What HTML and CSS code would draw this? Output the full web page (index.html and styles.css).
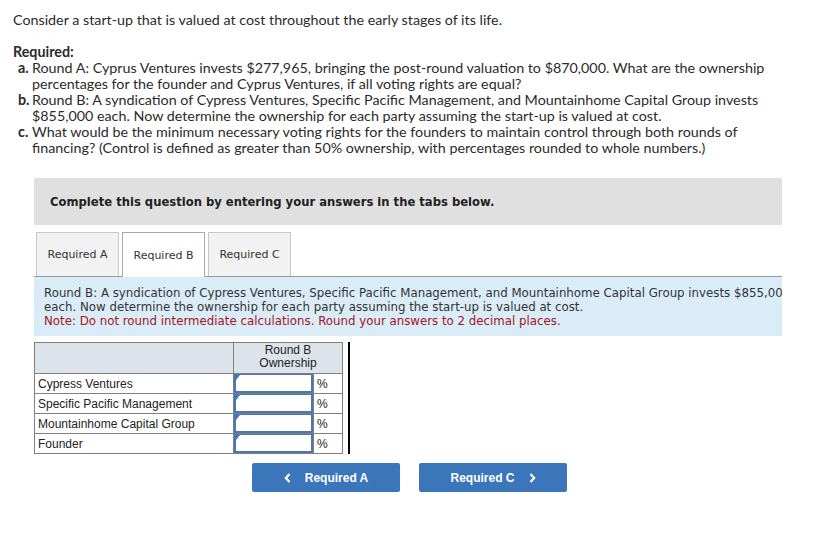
FILE: index.html
```html
<!DOCTYPE html>
<html>
<head>
<meta charset="utf-8">
<link rel="stylesheet" href="styles.css">
</head>
<body>
<div class="question">
  <p class="intro">Consider a start-up that is valued at cost throughout the early stages of its life.</p>
  <p class="req-title">Required:</p>
  <ol class="req-list">
    <li><span class="lbl">a.</span><span class="txt">Round A: Cyprus Ventures invests $277,965, bringing the post-round valuation to $870,000. What are the ownership percentages for the founder and Cyprus Ventures, if all voting rights are equal?</span></li>
    <li><span class="lbl">b.</span><span class="txt">Round B: A syndication of Cypress Ventures, Specific Pacific Management, and Mountainhome Capital Group invests $855,000 each. Now determine the ownership for each party assuming the start-up is valued at cost.</span></li>
    <li><span class="lbl">c.</span><span class="txt">What would be the minimum necessary voting rights for the founders to maintain control through both rounds of financing? (Control is defined as greater than 50% ownership, with percentages rounded to whole numbers.)</span></li>
  </ol>
</div>

<div class="work">
  <div class="banner">Complete this question by entering your answers in the tabs below.</div>
  <div class="tabs">
    <div class="tab">Required A</div>
    <div class="tab active">Required B</div>
    <div class="tab">Required C</div>
  </div>
  <div class="panel">
    <p>Round B: A syndication of Cypress Ventures, Specific Pacific Management, and Mountainhome Capital Group invests $855,000<br>each. Now determine the ownership for each party assuming the start-up is valued at cost.</p>
    <p class="note">Note: Do not round intermediate calculations. Round your answers to 2 decimal places.</p>
  </div>

  <div class="table-wrap">
    <table class="grid">
      <tr class="head">
        <th class="name"></th>
        <th colspan="2" class="colh">Round B<br>Ownership</th>
      </tr>
      <tr><td class="name">Cypress Ventures</td><td class="inp"><span class="box"></span></td><td class="pct">%</td></tr>
      <tr><td class="name">Specific Pacific Management</td><td class="inp"><span class="box"></span></td><td class="pct">%</td></tr>
      <tr><td class="name">Mountainhome Capital Group</td><td class="inp"><span class="box"></span></td><td class="pct">%</td></tr>
      <tr><td class="name">Founder</td><td class="inp"><span class="box"></span></td><td class="pct">%</td></tr>
    </table>
    <div class="vbar"></div>
  </div>

  <div class="nav">
    <button class="btn prev"><svg class="chev" width="7" height="10" viewBox="0 0 7 10"><polyline points="5.5,1 1.8,5 5.5,9" fill="none" stroke="#fff" stroke-width="2.2"/></svg>Required A</button>
    <button class="btn next">Required C<svg class="chev" width="7" height="10" viewBox="0 0 7 10"><polyline points="1.5,1 5.2,5 1.5,9" fill="none" stroke="#fff" stroke-width="2.2"/></svg></button>
  </div>
</div>
</body>
</html>
```

FILE: styles.css
```css
* { box-sizing: border-box; }
body {
  margin: 0;
  background: #fff;
  color: #222;
  font-family: "Lato", "Noto Sans", sans-serif;
}
.question {
  padding: 12px 0 0 13px;
  font-size: 14.3px;
  line-height: 16px;
  color: #2b2b2b;
}
.question p { margin: 0; }
.intro { margin-bottom: 16px !important; }
.req-title { font-weight: bold; }
.req-list {
  list-style: none;
  margin: 0;
  padding: 0;
  width: 762px;
}
.req-list li { display: flex; }
.lbl { width: 19px; padding-left: 5px; font-weight: bold; flex: none; }
.txt { flex: 1; }

.work { margin: 22px 0 0 34px; width: 748px; }
.banner {
  background: #e0e0e0;
  height: 47px;
  padding: 0 16px;
  display: flex;
  align-items: center;
  font-family: "DejaVu Sans", Verdana, sans-serif;
  font-weight: bold;
  font-size: 11.6px;
  color: #222;
}
.tabs {
  display: flex;
  gap: 3px;
  margin-top: 7px;
  padding-left: 2px;
  height: 44px;
  align-items: flex-end;
}
.tab {
  width: 83px;
  height: 44px;
  background: #f2f2f2;
  border: 1px solid #c8c8c8;
  border-bottom: none;
  display: flex;
  align-items: center;
  justify-content: center;
  font-family: "DejaVu Sans", Verdana, sans-serif;
  font-size: 11px;
  color: #333;
}
.tab.active {
  background: #fff;
  border-color: #aaa;
  height: 45px;
  margin-bottom: -1px;
  position: relative;
}
.panel {
  background: #dbecf9;
  border-top: 1px solid #999;
  padding: 9px 0 8px 10px;
  overflow: hidden;
  white-space: nowrap;
  font-family: "DejaVu Sans", Verdana, sans-serif;
  font-size: 11.8px;
  line-height: 14px;
  color: #333;
}
.panel p { margin: 0; }
.note { color: #a3161c; }

.table-wrap {
  display: flex;
  margin-top: 6px;
  align-items: stretch;
}
.grid {
  border-collapse: collapse;
  font-family: "Liberation Sans", Arial, sans-serif;
  font-size: 12px;
  color: #222;
}
.grid td, .grid th {
  border: 1px solid #808080;
  padding: 0;
}
.head th { background: #dde3ea; height: 31px; font-weight: normal; }
.colh { text-align: center; line-height: 13px; padding-bottom: 2px !important; }
.name { width: 199px; padding-left: 3px !important; text-align: left; height: 20px; }
.inp { width: 80px; padding: 0 !important; }
.pct { width: 29px; padding-left: 3px !important; }
.box {
  display: block;
  height: 19px;
  border: 2px solid #4a77b4;
  border-top-width: 1px;
  position: relative;
}
.box::before {
  content: "";
  position: absolute;
  left: 0; top: 0;
  border-top: 5px solid #3b74c0;
  border-right: 4px solid transparent;
  border-bottom: 0;
}
.vbar {
  width: 2px;
  background: #000;
  margin-left: 5px;
}
.nav {
  display: flex;
  gap: 19px;
  margin: 9px 0 0 218px;
}
.btn {
  width: 148px;
  height: 29px;
  background: #3b76bb;
  border: none;
  border-radius: 2px;
  color: #fff;
  font-family: "Liberation Sans", Arial, sans-serif;
  font-weight: bold;
  font-size: 12px;
  display: flex;
  align-items: center;
  justify-content: center;
  padding: 0;
}
.prev .chev { margin-right: 14px; }
.next .chev { margin-left: 14px; }
```
